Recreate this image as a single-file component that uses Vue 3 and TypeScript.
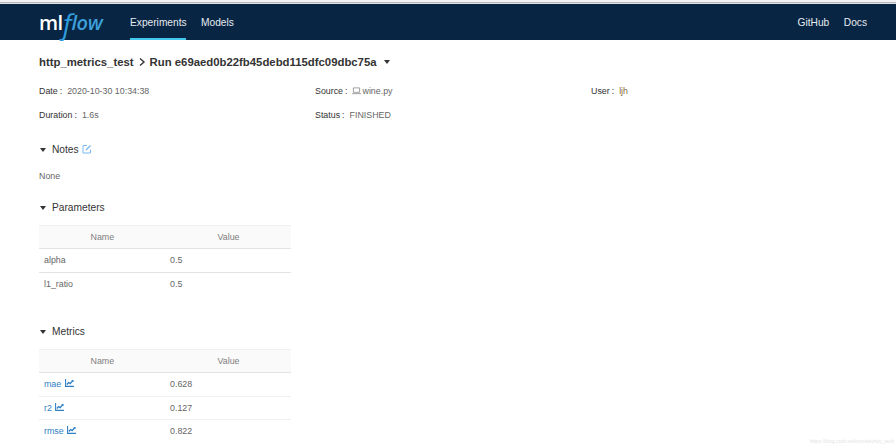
<script setup lang="ts">
interface Row { name: string; value: string; link?: boolean; plain?: boolean }
const params: Row[] = [
  { name: 'alpha', value: '0.5' },
  { name: 'l1_ratio', value: '0.5', plain: true },
]
const metrics: Row[] = [
  { name: 'mae', value: '0.628', link: true },
  { name: 'r2', value: '0.127', link: true },
  { name: 'rmse', value: '0.822', link: true, plain: true },
]
</script>

<template>
  <div class="page">
    <div class="topline"></div>
    <header class="nav">
      <div class="logo"><span class="ml">ml</span><span class="f">f</span><span class="flow">low</span></div>
      <a class="tab active">Experiments</a>
      <a class="tab">Models</a>
      <div class="spacer"></div>
      <a class="tab gh">GitHub</a>
      <a class="tab docs">Docs</a>
    </header>
    <main class="content">
      <h1 class="title">
        <span>http_metrics_test</span>
        <svg class="chev" width="8" height="10" viewBox="0 0 8 10"><path d="M2 1.5 6 5 2 8.5" fill="none" stroke="#333" stroke-width="1.4" /></svg>
        <span>Run e69aed0b22fb45debd115dfc09dbc75a</span>
        <i class="caret title-caret"></i>
      </h1>
      <div class="meta">
        <div><b>Date</b><span class="sep">:</span>2020-10-30 10:34:38</div>
        <div>
          <b>Source</b><span class="sep">:</span>
          <svg class="laptop" width="9" height="8" viewBox="0 0 10 9"><path d="M1.5 1h7v5h-7zM0 7.5h10" fill="none" stroke="#8a8a8a" stroke-width="0.9" /></svg>wine.py
        </div>
        <div><b>User</b><span class="sep">:</span><span class="user">ljh</span></div>
        <div><b>Duration</b><span class="sep">:</span>1.6s</div>
        <div><b>Status</b><span class="sep">:</span>FINISHED</div>
      </div>

      <h2 class="section notes"><i class="caret"></i>Notes
        <svg class="edit" width="10" height="10" viewBox="0 0 10 10"><path d="M8.5 5.5V9H1V1.5h4" fill="none" stroke="#7db8ee" stroke-width="1" /><path d="M3.5 6.5 4 5 8 1l1 1-4 4z" fill="#7db8ee" /></svg>
      </h2>
      <p class="none">None</p>

      <h2 class="section params"><i class="caret"></i>Parameters</h2>
      <div class="table">
        <div class="row head"><div class="c1">Name</div><div class="c2">Value</div></div>
        <div v-for="r in params" :key="r.name" class="row" :class="{ plain: r.plain }"><div class="c1">{{ r.name }}</div><div class="c2">{{ r.value }}</div></div>
      </div>

      <h2 class="section metrics"><i class="caret"></i>Metrics</h2>
      <div class="table">
        <div class="row head"><div class="c1">Name</div><div class="c2">Value</div></div>
        <div v-for="r in metrics" :key="r.name" class="row light" :class="{ plain: r.plain }">
          <div class="c1 link">{{ r.name }}
            <svg class="chart" width="9" height="8" viewBox="0 0 10 9"><path d="M.6 0v8.3H10" fill="none" stroke="#2f7fc4" stroke-width="1.2" /><path d="M2 6.2 4 4l1.7 1.2L8.6 2" fill="none" stroke="#2f7fc4" stroke-width="1.4" /><path d="M7 1.2h2.6v2.4z" fill="#2f7fc4" /></svg>
          </div>
          <div class="c2">{{ r.value }}</div>
        </div>
      </div>
    </main>
    <div class="watermark">https://blog.csdn.net/monkeyboy_tech</div>
  </div>
</template>

<style scoped>
.page {
  position: relative;
  width: 896px;
  height: 444px;
  overflow: hidden;
  background: #fff;
  font-family: "Liberation Sans", Arial, sans-serif;
  color: #666;
  font-size: 8.85px;
}
.topline { height: 4px; background: linear-gradient(#f4f4f4 0 2px, #b9b9b9 2px 3px, #dfe1e4 3px 4px); }
.nav {
  display: flex;
  align-items: stretch;
  height: 36px;
  background: #082544;
  padding-left: 39px;
  color: #e6ebf0;
}
.logo {
  width: 91px;
  display: flex;
  align-items: center;
  font-size: 20px;
  line-height: 1;
  padding-top: 1px;
  font-family: "Open Sans", sans-serif;
}
.ml { color: #fff; letter-spacing: -0.5px; font-weight: 600; }
.f { color: #2f9bdc; font-style: italic; font-size: 28px; margin: 0; font-weight: 400; }
.flow { color: #3c9fd9; font-style: italic; font-weight: 600; letter-spacing: -0.3px; }
.tab {
  display: flex;
  align-items: center;
  font-size: 10.2px;
  box-sizing: border-box;
  height: 36px;
  margin-right: 15px;
}
.active { width: 56px; border-bottom: 2px solid #43c9ed; padding-top: 2px; white-space: nowrap; }
.spacer { flex: 1; }
.gh { margin-right: 14.5px; }
.docs { margin-right: 29px; }
.content { padding: 0 0 0 39px; }
.title {
  display: flex;
  align-items: center;
  height: 15px;
  margin: 14px 0 0;
  font-size: 11.35px;
  font-weight: 700;
  color: #333;
}
.chev { margin: 0 4px 0 4px; }
.caret {
  display: inline-block;
  width: 0;
  height: 0;
  border-left: 3.5px solid transparent;
  border-right: 3.5px solid transparent;
  border-top: 4px solid #333;
  margin: 0 6px 1px 1px;
  vertical-align: middle;
}
.title-caret { margin-left: 7px; margin-top: 2px; }
.meta {
  display: grid;
  grid-template-columns: 276px 276px 1fr;
  grid-auto-rows: 23.5px;
  margin-top: 16px;
  line-height: 12px;
}
.meta b { font-weight: 400; color: #333; }
.sep { color: #333; margin: 0 5px 0 2px; }
.laptop { vertical-align: -1px; margin: 0 2px 0 -1px; }
.user { color: #8a6d3b; }
.section {
  margin: 0;
  font-weight: 400;
  font-size: 10.2px;
  line-height: 14px;
  color: #333;
}
.notes { margin-top: 11px; }
.edit { vertical-align: -1px; margin-left: 1px; }
.none { margin: 13px 0 0; line-height: 12px; }
.params { margin-top: 19px; }
.table { width: 252px; margin-top: 10px; }
.row {
  display: flex;
  height: 22.5px;
  align-items: center;
  border-bottom: 1px solid #e3e3e3;
}
.row.light { border-bottom-color: #f0f0f0; }
.row.plain { border-bottom-color: transparent; }
.head { height: 22px; background: #fafafa; border-top: 1px solid #f0f0f0; border-bottom-color: #e3e3e3; color: #808080; }
.c1 { width: 131px; padding-left: 5px; box-sizing: border-box; white-space: nowrap; }
.c2 { flex: 1; }
.head .c1 { padding-left: 51.5px; }
.head .c2 { padding-left: 47.5px; }
.link { color: #2f7fc4; }
.chart { margin-left: 1px; vertical-align: 0; }
.metrics { margin-top: 29px; }
.watermark {
  position: absolute;
  right: 2px;
  bottom: 0;
  font-size: 5px;
  color: #e4e4e4;
}
</style>
